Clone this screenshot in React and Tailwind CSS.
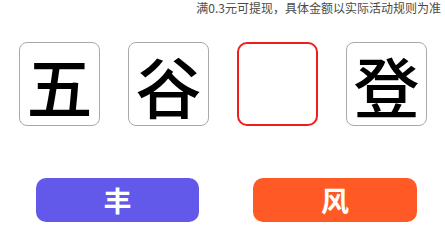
import React from 'react';

const cjk = { fontFamily: '"Noto Sans CJK SC", "Noto Sans", sans-serif' };

const CharBox = ({ ch, active }) => {
    if (active) {
        return <div className="w-[81px] h-[84px] rounded-[10px] border-2 border-[#f21c1c] bg-white"></div>;
    }
    return (
        <div className="w-[81px] h-[84px] rounded-[8px] border border-[#a9a9a9] bg-white flex items-center justify-center">
            <span className="text-[66px] leading-none font-medium text-black">{ch}</span>
        </div>
    );
};

const App = () => {
    const chars = [
        { ch: '五' },
        { ch: '谷' },
        { ch: '', active: true },
        { ch: '登' },
    ];

    return (
        <div className="w-[445px] h-[225px] bg-white overflow-hidden" style={cjk}>
            {/* notice */}
            <div className="h-[16px] flex justify-end pr-[4px] pt-[1px]">
                <p className="text-[12px] leading-[14px] text-[#4a4a4a]">满0.3元可提现，具体金额以实际活动规则为准</p>
            </div>

            {/* idiom boxes */}
            <div className="flex gap-[28px] pl-[19px] mt-[26px]">
                {chars.map((c, i) => (
                    <CharBox key={i} ch={c.ch} active={c.active} />
                ))}
            </div>

            {/* options */}
            <div className="flex gap-[54px] pl-[36px] mt-[52px]">
                <button className="w-[163px] h-[44px] rounded-[10px] bg-[#6258ea] text-white text-[28px] font-bold leading-none flex items-center justify-center">
                    丰
                </button>
                <button className="w-[164px] h-[44px] rounded-[10px] bg-[#ff5a26] text-white text-[28px] font-bold leading-none flex items-center justify-center">
                    风
                </button>
            </div>
        </div>
    );
};

export default App;
